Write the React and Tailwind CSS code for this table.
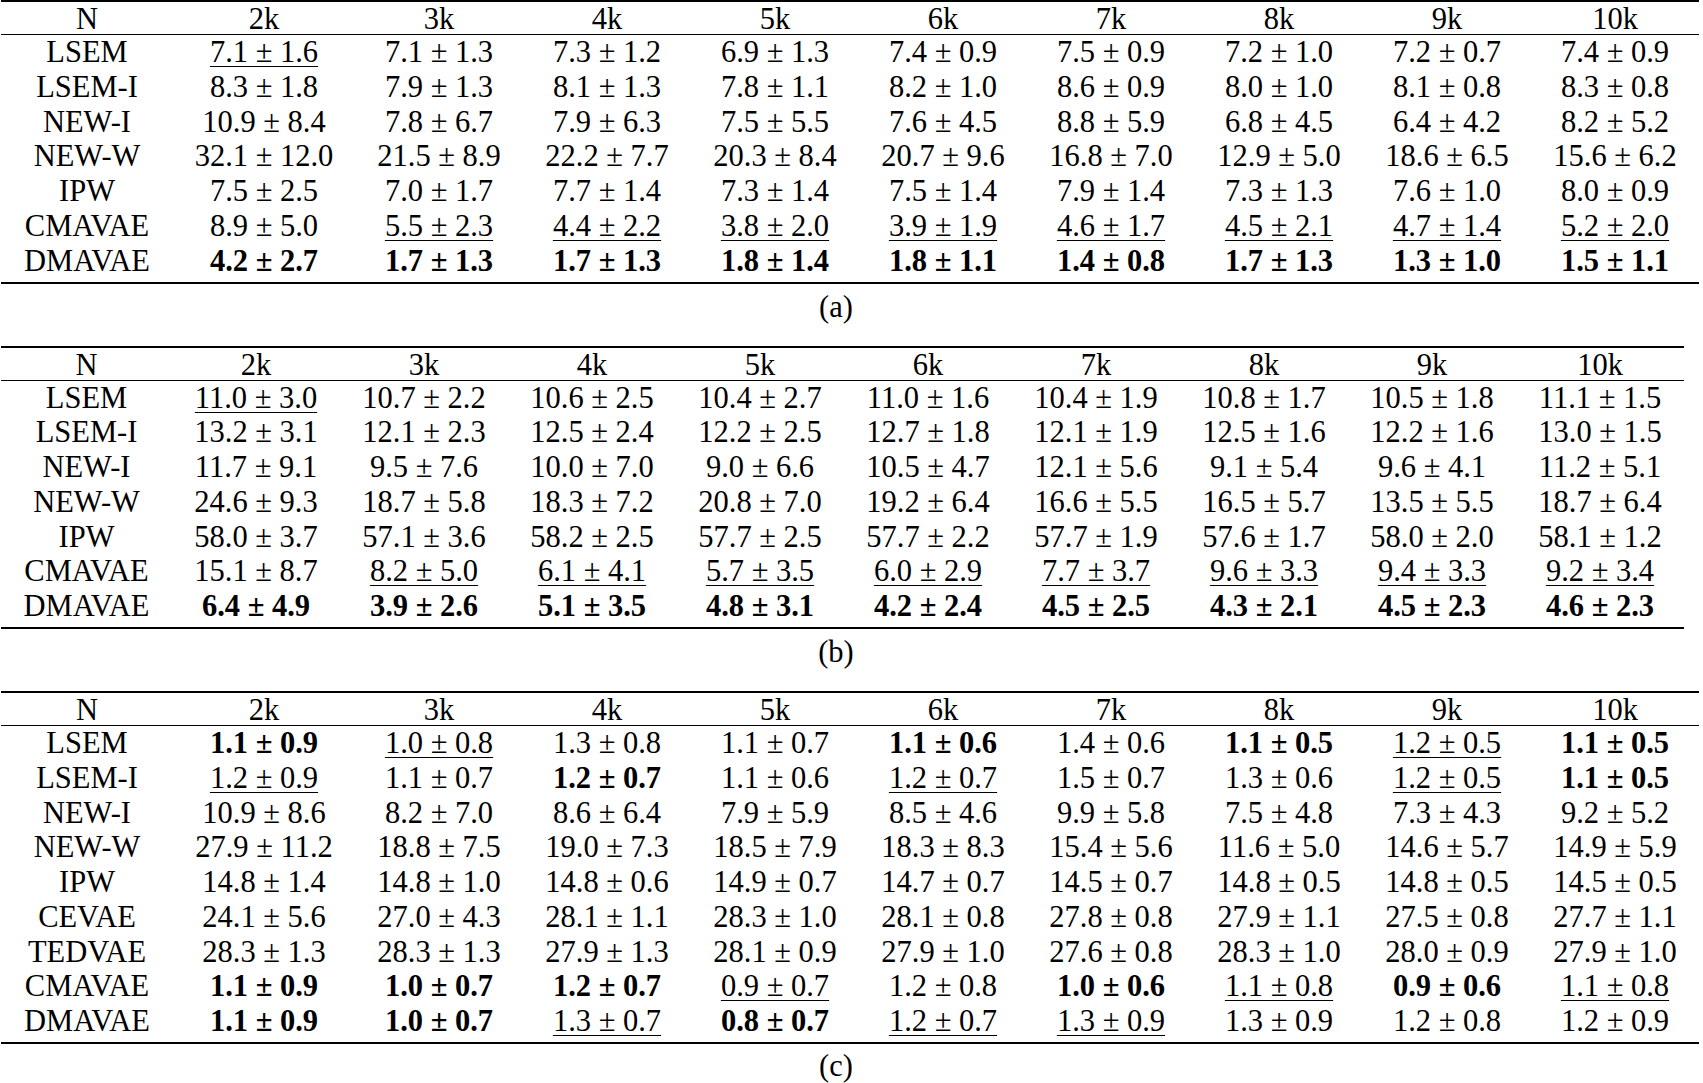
import React from "react";

const HEAD = ["N", "2k", "3k", "4k", "5k", "6k", "7k", "8k", "9k", "10k"];

// cell notation: "v" plain, "u:v" underline, "b:v" bold
const TA = [
  ["LSEM", "u:7.1 ± 1.6", "7.1 ± 1.3", "7.3 ± 1.2", "6.9 ± 1.3", "7.4 ± 0.9", "7.5 ± 0.9", "7.2 ± 1.0", "7.2 ± 0.7", "7.4 ± 0.9"],
  ["LSEM-I", "8.3 ± 1.8", "7.9 ± 1.3", "8.1 ± 1.3", "7.8 ± 1.1", "8.2 ± 1.0", "8.6 ± 0.9", "8.0 ± 1.0", "8.1 ± 0.8", "8.3 ± 0.8"],
  ["NEW-I", "10.9 ± 8.4", "7.8 ± 6.7", "7.9 ± 6.3", "7.5 ± 5.5", "7.6 ± 4.5", "8.8 ± 5.9", "6.8 ± 4.5", "6.4 ± 4.2", "8.2 ± 5.2"],
  ["NEW-W", "32.1 ± 12.0", "21.5 ± 8.9", "22.2 ± 7.7", "20.3 ± 8.4", "20.7 ± 9.6", "16.8 ± 7.0", "12.9 ± 5.0", "18.6 ± 6.5", "15.6 ± 6.2"],
  ["IPW", "7.5 ± 2.5", "7.0 ± 1.7", "7.7 ± 1.4", "7.3 ± 1.4", "7.5 ± 1.4", "7.9 ± 1.4", "7.3 ± 1.3", "7.6 ± 1.0", "8.0 ± 0.9"],
  ["CMAVAE", "8.9 ± 5.0", "u:5.5 ± 2.3", "u:4.4 ± 2.2", "u:3.8 ± 2.0", "u:3.9 ± 1.9", "u:4.6 ± 1.7", "u:4.5 ± 2.1", "u:4.7 ± 1.4", "u:5.2 ± 2.0"],
  ["DMAVAE", "b:4.2 ± 2.7", "b:1.7 ± 1.3", "b:1.7 ± 1.3", "b:1.8 ± 1.4", "b:1.8 ± 1.1", "b:1.4 ± 0.8", "b:1.7 ± 1.3", "b:1.3 ± 1.0", "b:1.5 ± 1.1"],
];

const TB = [
  ["LSEM", "u:11.0 ± 3.0", "10.7 ± 2.2", "10.6 ± 2.5", "10.4 ± 2.7", "11.0 ± 1.6", "10.4 ± 1.9", "10.8 ± 1.7", "10.5 ± 1.8", "11.1 ± 1.5"],
  ["LSEM-I", "13.2 ± 3.1", "12.1 ± 2.3", "12.5 ± 2.4", "12.2 ± 2.5", "12.7 ± 1.8", "12.1 ± 1.9", "12.5 ± 1.6", "12.2 ± 1.6", "13.0 ± 1.5"],
  ["NEW-I", "11.7 ± 9.1", "9.5 ± 7.6", "10.0 ± 7.0", "9.0 ± 6.6", "10.5 ± 4.7", "12.1 ± 5.6", "9.1 ± 5.4", "9.6 ± 4.1", "11.2 ± 5.1"],
  ["NEW-W", "24.6 ± 9.3", "18.7 ± 5.8", "18.3 ± 7.2", "20.8 ± 7.0", "19.2 ± 6.4", "16.6 ± 5.5", "16.5 ± 5.7", "13.5 ± 5.5", "18.7 ± 6.4"],
  ["IPW", "58.0 ± 3.7", "57.1 ± 3.6", "58.2 ± 2.5", "57.7 ± 2.5", "57.7 ± 2.2", "57.7 ± 1.9", "57.6 ± 1.7", "58.0 ± 2.0", "58.1 ± 1.2"],
  ["CMAVAE", "15.1 ± 8.7", "u:8.2 ± 5.0", "u:6.1 ± 4.1", "u:5.7 ± 3.5", "u:6.0 ± 2.9", "u:7.7 ± 3.7", "u:9.6 ± 3.3", "u:9.4 ± 3.3", "u:9.2 ± 3.4"],
  ["DMAVAE", "b:6.4 ± 4.9", "b:3.9 ± 2.6", "b:5.1 ± 3.5", "b:4.8 ± 3.1", "b:4.2 ± 2.4", "b:4.5 ± 2.5", "b:4.3 ± 2.1", "b:4.5 ± 2.3", "b:4.6 ± 2.3"],
];

const TC = [
  ["LSEM", "b:1.1 ± 0.9", "u:1.0 ± 0.8", "1.3 ± 0.8", "1.1 ± 0.7", "b:1.1 ± 0.6", "1.4 ± 0.6", "b:1.1 ± 0.5", "u:1.2 ± 0.5", "b:1.1 ± 0.5"],
  ["LSEM-I", "u:1.2 ± 0.9", "1.1 ± 0.7", "b:1.2 ± 0.7", "1.1 ± 0.6", "u:1.2 ± 0.7", "1.5 ± 0.7", "1.3 ± 0.6", "u:1.2 ± 0.5", "b:1.1 ± 0.5"],
  ["NEW-I", "10.9 ± 8.6", "8.2 ± 7.0", "8.6 ± 6.4", "7.9 ± 5.9", "8.5 ± 4.6", "9.9 ± 5.8", "7.5 ± 4.8", "7.3 ± 4.3", "9.2 ± 5.2"],
  ["NEW-W", "27.9 ± 11.2", "18.8 ± 7.5", "19.0 ± 7.3", "18.5 ± 7.9", "18.3 ± 8.3", "15.4 ± 5.6", "11.6 ± 5.0", "14.6 ± 5.7", "14.9 ± 5.9"],
  ["IPW", "14.8 ± 1.4", "14.8 ± 1.0", "14.8 ± 0.6", "14.9 ± 0.7", "14.7 ± 0.7", "14.5 ± 0.7", "14.8 ± 0.5", "14.8 ± 0.5", "14.5 ± 0.5"],
  ["CEVAE", "24.1 ± 5.6", "27.0 ± 4.3", "28.1 ± 1.1", "28.3 ± 1.0", "28.1 ± 0.8", "27.8 ± 0.8", "27.9 ± 1.1", "27.5 ± 0.8", "27.7 ± 1.1"],
  ["TEDVAE", "28.3 ± 1.3", "28.3 ± 1.3", "27.9 ± 1.3", "28.1 ± 0.9", "27.9 ± 1.0", "27.6 ± 0.8", "28.3 ± 1.0", "28.0 ± 0.9", "27.9 ± 1.0"],
  ["CMAVAE", "b:1.1 ± 0.9", "b:1.0 ± 0.7", "b:1.2 ± 0.7", "u:0.9 ± 0.7", "1.2 ± 0.8", "b:1.0 ± 0.6", "u:1.1 ± 0.8", "b:0.9 ± 0.6", "u:1.1 ± 0.8"],
  ["DMAVAE", "b:1.1 ± 0.9", "b:1.0 ± 0.7", "u:1.3 ± 0.7", "b:0.8 ± 0.7", "u:1.2 ± 0.7", "u:1.3 ± 0.9", "1.3 ± 0.9", "1.2 ± 0.8", "1.2 ± 0.9"],
];

function Cell({ v }) {
  const base = "h-[34.75px] leading-[34.75px] text-center whitespace-nowrap";
  if (v.startsWith("u:")) {
    return (
      <div className={base}>
        <span className="underline decoration-1 underline-offset-[4px]">{v.slice(2)}</span>
      </div>
    );
  }
  if (v.startsWith("b:")) {
    return <div className={`${base} font-bold`}>{v.slice(2)}</div>;
  }
  return <div className={base}>{v}</div>;
}

function Table({ rows, cols, width }) {
  return (
    <div className={width}>
      <div className="h-[2px] bg-black" />
      <div className={`grid ${cols} h-[32px]`}>
        {HEAD.map((h) => (
          <div key={h} className="h-[32px] pt-[3px] leading-[29px] text-center">{h}</div>
        ))}
      </div>
      <div className="h-px bg-black" />
      {rows.map((r, i) => (
        <div key={i} className={`grid ${cols} h-[34.75px]`}>
          {r.map((c, j) => (
            <Cell key={j} v={c} />
          ))}
        </div>
      ))}
      <div className="h-[3.25px]" />
      <div className="h-[2px] bg-black" />
    </div>
  );
}

function Caption({ children, spacing }) {
  return (
    <div className={`w-[1670px] h-[32px] leading-[32px] text-center ${spacing}`}>{children}</div>
  );
}

export default function App() {
  const wide = "grid-cols-[172px_182px_repeat(8,168px)]";
  const narrow = "grid-cols-[171px_repeat(9,168px)]";
  return (
    <div className="w-[1703px] h-[1083px] bg-white text-black overflow-hidden text-[30.5px] [font-family:'Liberation_Serif','Times_New_Roman',serif]">
      <div className="pl-px">
        <Table rows={TA} cols={wide} width="w-[1698px]" />
        <Caption spacing="mt-[7px] mb-[23px]">(a)</Caption>
        <Table rows={TB} cols={narrow} width="w-[1683px]" />
        <Caption spacing="mt-[7px] mb-[23px]">(b)</Caption>
        <Table rows={TC} cols={wide} width="w-[1698px]" />
        <Caption spacing="mt-[6px]">(c)</Caption>
      </div>
    </div>
  );
}
